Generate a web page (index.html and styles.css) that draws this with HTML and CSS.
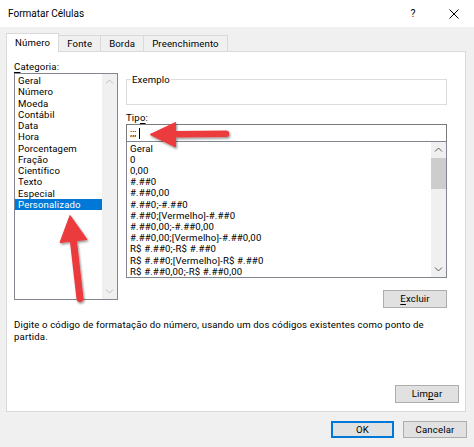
FILE: index.html
```html
<!DOCTYPE html>
<html lang="pt-BR">
<head>
<meta charset="utf-8">
<title>Formatar Células</title>
<link rel="stylesheet" href="styles.css">
</head>
<body>
<div class="dialog">
  <div class="titlebar">
    <span class="title">Formatar Células</span>
    <span class="help">?</span>
    <span class="close"><svg width="10" height="10" viewBox="0 0 10 10"><path d="M0.5 0.5 L9.5 9.5 M9.5 0.5 L0.5 9.5" stroke="#000" stroke-width="1" fill="none"/></svg></span>
  </div>
  <div class="tabs">
    <div class="tab active">Número</div>
    <div class="tab">Fonte</div>
    <div class="tab">Borda</div>
    <div class="tab">Preenchimento</div>
  </div>
  <div class="panel">
    <div class="grid">
      <div class="col">
        <div class="label"><u>C</u>ategoria:</div>
        <div class="listbox cat">
          <div class="items">
            <div class="item">Geral</div>
            <div class="item">Número</div>
            <div class="item">Moeda</div>
            <div class="item">Contábil</div>
            <div class="item">Data</div>
            <div class="item">Hora</div>
            <div class="item">Porcentagem</div>
            <div class="item">Fração</div>
            <div class="item">Científico</div>
            <div class="item">Texto</div>
            <div class="item">Especial</div>
            <div class="item selected">Personalizado</div>
          </div>
          <div class="vscroll disabled">
            <svg class="arrow" width="15" height="16" viewBox="0 0 15 16"><polyline points="4,9.5 7.5,6 11,9.5" fill="none" stroke="currentColor" stroke-width="1"/></svg>
            <svg class="arrow" width="15" height="16" viewBox="0 0 15 16"><polyline points="4,6.5 7.5,10 11,6.5" fill="none" stroke="currentColor" stroke-width="1"/></svg>
          </div>
        </div>
      </div>
      <div class="col">
        <div class="groupbox"><span class="glabel">Exemplo</span></div>
        <div class="label tipo">Tip<u>o</u>:</div>
        <div class="input">;;;<span class="caret"></span></div>
        <div class="listbox types">
          <div class="items">
            <div class="item">Geral</div>
            <div class="item">0</div>
            <div class="item">0,00</div>
            <div class="item">#.##0</div>
            <div class="item">#.##0,00</div>
            <div class="item">#.##0;-#.##0</div>
            <div class="item">#.##0;[Vermelho]-#.##0</div>
            <div class="item">#.##0,00;-#.##0,00</div>
            <div class="item">#.##0,00;[Vermelho]-#.##0,00</div>
            <div class="item">R$ #.##0;-R$ #.##0</div>
            <div class="item">R$ #.##0;[Vermelho]-R$ #.##0</div>
            <div class="item">R$ #.##0,00;-R$ #.##0,00</div>
          </div>
          <div class="vscroll">
            <svg class="arrow" width="15" height="16" viewBox="0 0 15 16"><polyline points="4,9.5 7.5,6 11,9.5" fill="none" stroke="currentColor" stroke-width="1"/></svg>
            <div class="thumb"></div>
            <div class="track"></div>
            <svg class="arrow" width="15" height="16" viewBox="0 0 15 16"><polyline points="4,6.5 7.5,10 11,6.5" fill="none" stroke="currentColor" stroke-width="1"/></svg>
          </div>
        </div>
        <div class="btnrow excl"><button class="btn"><u>E</u>xcluir</button></div>
      </div>
    </div>
    <p class="desc">Digite o código de formatação do número, usando um dos códigos existentes como ponto de<br>partida.</p>
    <div class="btnrow limpar"><button class="btn">Lim<u>p</u>ar</button></div>
  </div>
  <div class="footer">
    <button class="btn ok">OK</button>
    <button class="btn">Cancelar</button>
  </div>
</div>
<svg class="annot" width="474" height="447" viewBox="0 0 474 447">
  <defs>
    <filter id="sh" x="-20%" y="-20%" width="140%" height="140%">
      <feDropShadow dx="1" dy="1.5" stdDeviation="1.2" flood-color="#000" flood-opacity="0.45"/>
    </filter>
  </defs>
  <g filter="url(#sh)" fill="#ec3a3e" stroke="#ec3a3e">
    <polygon points="150,134.5 175.5,122.5 175.5,147" stroke-linejoin="round" stroke-width="1"/>
    <line x1="174" y1="134.3" x2="226" y2="133.8" stroke-width="6.6" stroke-linecap="round"/>
    <polygon points="70,215.5 87,239.5 60,242.5" stroke-linejoin="round" stroke-width="1"/>
    <line x1="73.3" y1="240" x2="80" y2="298.5" stroke-width="7" stroke-linecap="round"/>
  </g>
</svg>
</body>
</html>
```

FILE: styles.css
```css
* { box-sizing: border-box; }
html, body { margin: 0; padding: 0; }
body {
  width: 474px;
  height: 447px;
  background: #f0f0f0;
  font-family: Roboto, "Noto Sans", sans-serif;
  font-size: 9.6px;
  letter-spacing: 0.15px;
  color: #000;
  position: relative;
  overflow: hidden;
}
u { text-decoration-thickness: 1px; text-underline-offset: 1.5px; }

.titlebar {
  height: 27px;
  background: #fff;
  display: flex;
  align-items: center;
  padding: 0 7px 0 8px;
}
.title { flex: 1; font-size: 10px; letter-spacing: 0; }
.help { width: 26px; margin-right: 14px; text-align: center; font-size: 10.5px; }
.close { width: 27px; display: flex; justify-content: center; }

.tabs {
  display: flex;
  align-items: flex-end;
  height: 18px;
  margin-top: 6px;
  padding-left: 6px;
}
.tab {
  height: 16px;
  line-height: 15px;
  padding: 0 8px;
  border: 1px solid #d9d9d9;
  border-bottom: none;
  margin-left: -1px;
  background: #f0f0f0;
}
.tab:first-child { margin-left: 0; }
.tab.active {
  height: 19px;
  line-height: 18px;
  margin-bottom: -1px;
  background: #fff;
  position: relative;
  z-index: 1;
}

.panel {
  margin-left: 6px;
  width: 460px;
  height: 361px;
  background: #fff;
  border: 1px solid #d9d9d9;
  padding: 8px 6px 0 7px;
}
.grid {
  display: grid;
  grid-template-columns: 104px 321px;
  column-gap: 8px;
  align-items: start;
}
.label { height: 13px; line-height: 13px; }

.listbox {
  display: flex;
  border: 1px solid #82878f;
  background: #fff;
}
.items {
  flex: 1;
  line-height: 11.25px;
  white-space: nowrap;
  overflow: hidden;
}
.cat { height: 227px; }
.cat .items { padding-top: 1px; }
.cat .item { padding-left: 3px; }
.item.selected { background: #0078d7; color: #fff; }

.types { height: 137px; }
.types .items { padding: 0.5px 0 0 3px; line-height: 11.2px; }

.vscroll {
  width: 15px;
  background: #f0f0f0;
  display: flex;
  flex-direction: column;
  justify-content: space-between;
  color: #606060;
}
.vscroll.disabled { color: #bfbfbf; }
.arrow { display: block; flex: none; }
.thumb { height: 31px; background: #cdcdcd; flex: none; }
.track { flex: 1; }

.groupbox {
  margin-top: 19px;
  height: 26px;
  border: 1px solid #dcdcdc;
  display: flex;
  align-items: flex-start;
}
.glabel {
  margin: -7px 0 0 4px;
  padding: 0 1px;
  line-height: 13px;
  background: #fff;
}
.tipo { margin-top: 6px; }
.input {
  height: 17px;
  border: 1px solid #7a7a7a;
  border-bottom: none;
  padding-left: 3px;
  display: flex;
  align-items: center;
  line-height: 14px;
}
.caret { width: 1px; height: 11px; background: #000; margin-left: 2px; }

.btnrow { display: flex; justify-content: flex-end; }
.excl { margin-top: 12px; }
.btn {
  height: 18px;
  width: 64px;
  padding: 0;
  background: #e1e1e1;
  border: 1px solid #adadad;
  font: inherit;
  letter-spacing: inherit;
  color: #000;
  line-height: 14px;
}
.desc { margin: 11px 0 0; line-height: 11.5px; }
.limpar { margin-top: 43px; }

.footer {
  display: flex;
  justify-content: flex-end;
  gap: 9px;
  margin-top: 9px;
  padding-right: 7px;
}
.footer .btn { height: 17px; }
.ok { width: 63px; border-color: #0078d7; box-shadow: inset 0 0 0 1px #0078d7; }

.annot { position: absolute; left: 0; top: 0; pointer-events: none; }
```
